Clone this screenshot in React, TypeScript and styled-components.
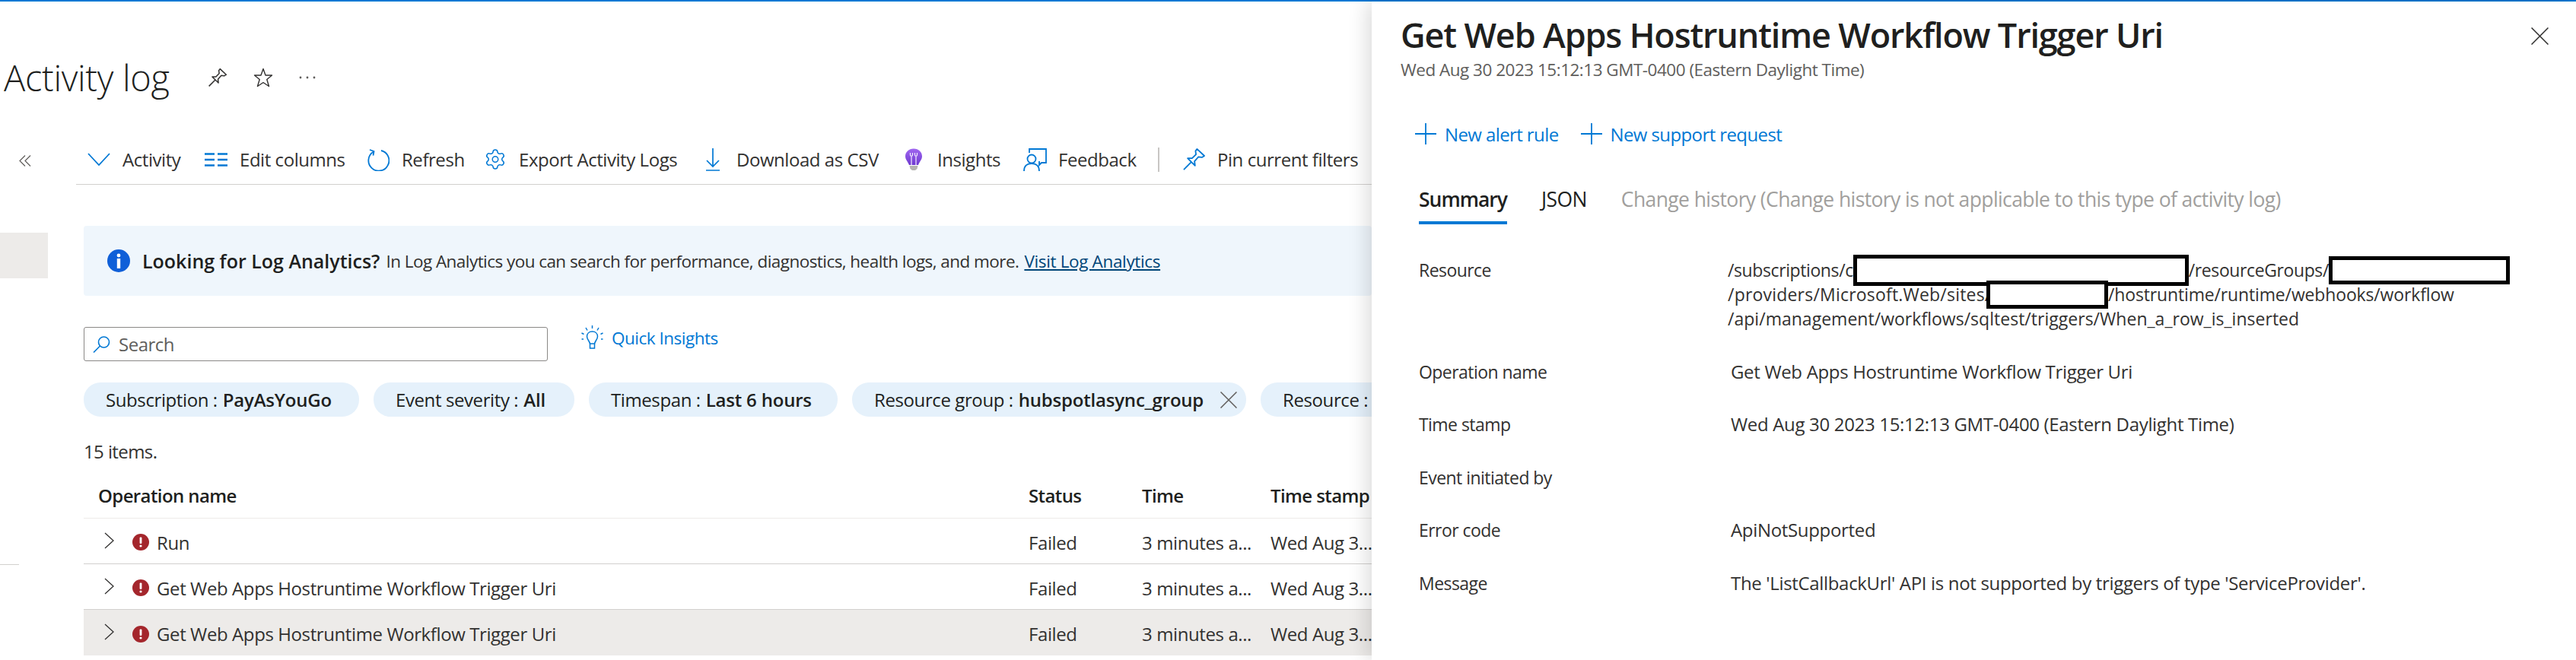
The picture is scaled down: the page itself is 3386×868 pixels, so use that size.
import React from 'react';
import styled, { createGlobalStyle } from 'styled-components';
import { Settings } from 'lucide-react';

const GlobalStyle = createGlobalStyle`
  html, body {
    margin: 0;
    height: 868px;
    overflow: hidden;
    background: #fff;
    font-family: 'Open Sans', 'Noto Sans', sans-serif;
    color: #323130;
  }
  * { box-sizing: border-box; }
`;

const Page = styled.div`
  display: flex;
  width: 3386px;
  height: 868px;
  border-top: 2px solid #0078d4;
`;

const Blade = styled.div`
  width: 1803px;
  flex: none;
  overflow: hidden;
  display: flex;
  flex-direction: column;
`;

const TitleBar = styled.div`
  display: flex;
  align-items: center;
  height: 60px;
  margin-top: 70px;
  padding-left: 5px;
`;

const PageTitle = styled.h1`
  margin: 0 46px 0 0;
  font-size: 47px;
  font-weight: 300;
  letter-spacing: -0.3px;
  line-height: 60px;
  color: #201f1e;
  width: 222px;
  white-space: nowrap;
`;

const TitleIcons = styled.div`
  display: flex;
  align-items: center;
  gap: 34px;
`;

const BladeBody = styled.div`
  display: flex;
  flex: 1;
`;

const SideNav = styled.div`
  width: 100px;
  flex: none;
  display: flex;
  flex-direction: column;
`;

const Collapse = styled.div`
  margin: 72px 0 0 25px;
  height: 15px;
  display: flex;
`;

const NavActive = styled.div`
  width: 63px;
  height: 60px;
  margin-top: 87px;
  background: #edebe9;
`;

const NavDivider = styled.div`
  width: 25px;
  height: 1px;
  margin-top: 376px;
  background: #d2d0ce;
`;

const Content = styled.div`
  flex: 1;
  min-width: 0;
`;

const Toolbar = styled.div`
  display: flex;
  align-items: center;
  height: 111px;
  padding: 45px 0 0 15px;
  border-bottom: 1px solid #d2d0ce;
  white-space: nowrap;
`;

const ToolItem = styled.div`
  display: flex;
  align-items: center;
  flex: none;
  margin-right: 30px;
  font-size: 24px;
  letter-spacing: -0.45px;
  color: #323130;
`;

const ToolIcon = styled.span`
  display: flex;
  justify-content: center;
  align-items: center;
  width: 30px;
  height: 32px;
  margin-right: 16px;
  flex: none;
`;

const ToolLabel = styled.span<{ $w: number }>`
  display: block;
  width: ${(p) => p.$w}px;
`;

const ToolSep = styled.div`
  flex: none;
  width: 2px;
  height: 32px;
  margin-right: 30px;
  background: #c8c6c4;
`;

const Section = styled.div`
  padding-left: 10px;
`;

const Banner = styled.div`
  display: flex;
  align-items: center;
  height: 92px;
  margin-top: 54px;
  padding-left: 31px;
  background: #eff6fc;
  border-radius: 4px;
  font-size: 22.5px;
  letter-spacing: -0.55px;
  white-space: nowrap;
`;

const BannerIcon = styled.span`
  display: flex;
  margin-right: 16px;
`;

const BannerLead = styled.b`
  font-size: 25px;
  font-weight: 600;
  margin-right: 8px;
  letter-spacing: 0;
  color: #201f1e;
`;

const BannerLink = styled.a`
  margin-left: 7px;
  color: #004578;
  letter-spacing: -0.35px;
  text-decoration: underline;
`;

const SearchRow = styled.div`
  display: flex;
  align-items: flex-start;
  margin-top: 41px;
`;

const SearchBox = styled.div`
  display: flex;
  align-items: center;
  width: 610px;
  height: 45px;
  padding-left: 11px;
  gap: 11px;
  border: 1.5px solid #8a8886;
  border-radius: 3px;
  font-size: 24px;
  letter-spacing: -0.5px;
  color: #605e5c;
`;

const QuickInsights = styled.a`
  display: flex;
  align-items: center;
  margin: -2px 0 0 44px;
  gap: 11px;
  font-size: 22.5px;
  letter-spacing: -0.5px;
  color: #0078d4;
`;

const Pills = styled.div`
  display: flex;
  gap: 19px;
  margin-top: 28px;
  white-space: nowrap;
`;

const Pill = styled.div<{ $w: number }>`
  display: flex;
  align-items: center;
  flex: none;
  width: ${(p) => p.$w}px;
  height: 45px;
  padding-left: 29px;
  background: #e5f1fb;
  border-radius: 22px;
  font-size: 24px;
  letter-spacing: -0.4px;
  color: #201f1e;

  b {
    font-weight: 600;
    margin-left: 7px;
    letter-spacing: -0.2px;
  }
`;

const PillClose = styled.span`
  display: flex;
  margin-left: 22px;
`;

const ItemCount = styled.div`
  margin-top: 28px;
  height: 36px;
  line-height: 36px;
  font-size: 24px;
  letter-spacing: -0.6px;
`;

const TableGrid = styled.div<{ $head?: boolean; $selected?: boolean }>`
  display: grid;
  grid-template-columns: 1242px 149px 169px 300px;
  align-items: center;
  height: ${(p) => (p.$head ? 61 : 60)}px;
  margin-top: ${(p) => (p.$head ? 9 : 0)}px;
  padding-top: ${(p) => (p.$head ? 0 : 3)}px;
  border-bottom: ${(p) => (p.$selected ? 0 : p.$head ? '1px solid #edebe9' : '1px solid #d2d0ce')};
  background: ${(p) => (p.$selected ? '#edebe9' : 'transparent')};
  font-size: 24px;
  font-weight: ${(p) => (p.$head ? 600 : 400)};
  letter-spacing: ${(p) => (p.$head ? '-0.6px' : '-0.4px')};
  color: ${(p) => (p.$head ? '#201f1e' : '#323130')};
  white-space: nowrap;
`;

const HeadName = styled.div`
  padding-left: 19px;
`;

const RowName = styled.div`
  display: flex;
  align-items: center;
  padding-left: 27px;
`;

const RowChevron = styled.span`
  display: flex;
  margin: -5px 24px 0 0;
`;

const RowError = styled.span`
  display: flex;
  margin-right: 10px;
`;

const Panel = styled.aside`
  flex: 1;
  position: relative;
  z-index: 1;
  background: #fff;
  box-shadow: -6px 0 24px rgba(0, 0, 0, 0.14);
  padding-left: 38px;
`;

const PanelHead = styled.div`
  display: flex;
  justify-content: space-between;
  padding: 14px 36px 0 0;
`;

const PanelTitle = styled.h2`
  margin: 0;
  font-size: 45px;
  font-weight: 600;
  line-height: 60px;
  letter-spacing: -1.15px;
  color: #201f1e;
  white-space: nowrap;
`;

const PanelSub = styled.div`
  margin-top: 2px;
  font-size: 22.5px;
  line-height: 28px;
  letter-spacing: -0.5px;
  color: #605e5c;
`;

const PanelClose = styled.span`
  display: flex;
  margin-top: 20px;
`;

const PanelActions = styled.div`
  display: flex;
  gap: 29px;
  margin: 55px 0 0 19px;
`;

const PanelAction = styled.a`
  display: flex;
  align-items: center;
  gap: 11px;
  height: 30px;
  font-size: 24px;
  letter-spacing: -0.6px;
  color: #0078d4;
`;

const Tabs = styled.div`
  display: flex;
  gap: 45px;
  margin: 52px 0 0 24px;
  height: 52px;
  white-space: nowrap;
`;

const Tab = styled.div<{ $active?: boolean; $disabled?: boolean }>`
  height: 52px;
  line-height: 38px;
  font-size: 26.5px;
  font-weight: ${(p) => (p.$active ? 600 : 400)};
  letter-spacing: ${(p) => (p.$active ? '-1px' : '-0.6px')};
  color: ${(p) => (p.$disabled ? '#a19f9d' : '#201f1e')};
  border-bottom: 4px solid ${(p) => (p.$active ? '#0078d4' : 'transparent')};
`;

const Details = styled.div`
  display: grid;
  grid-template-columns: 410px 1fr;
  row-gap: 37.5px;
  margin: 44px 0 0 24px;
  line-height: 32px;
  color: #323130;
`;

const DetailLabel = styled.div`
  min-height: 32px;
  font-size: 23px;
  letter-spacing: -0.55px;
`;

const DetailValue = styled.div`
  min-height: 32px;
  font-size: 24px;
  letter-spacing: -0.33px;
`;

const ResourcePath = styled.div`
  margin-left: -4px;
  font-size: 23px;
`;

const PathLine = styled.div<{ $ls: number }>`
  display: flex;
  align-items: center;
  height: 32px;
  letter-spacing: ${(p) => p.$ls}px;
  white-space: pre;
`;

const PathPrefix = styled.span`
  width: 340px;
  letter-spacing: 0.2px;
`;

const Redact = styled.span<{ $w: number; $h: number }>`
  display: block;
  flex: none;
  width: ${(p) => p.$w}px;
  height: ${(p) => p.$h}px;
  margin: -8px 0;
  border: 5px solid #000;
  background: #fff;
`;

const Stroke = styled.svg<{ $c?: string }>`
  display: block;
  fill: none;
  stroke: ${(p) => p.$c ?? '#323130'};
  stroke-width: 1.4;
  flex: none;
`;

const BLUE = '#0078d4';

const PinIcon = ({ size, color }: { size: number; color?: string }) => (
  <Stroke $c={color} width={size} height={size} viewBox="0 0 24 24">
    <path d="M15 1.5 L22.5 8.5 L20 10 L16.5 9.5 L12.5 14 L13 18.5 L5.5 11 L10 11 L14 7 L13.5 3.5 Z" strokeLinejoin="round" />
    <path d="M9 15 L1.5 22.5" />
  </Stroke>
);

const ErrorIcon = () => (
  <svg width="22" height="22" viewBox="0 0 22 22">
    <circle cx="11" cy="11" r="11" fill="#a4262c" />
    <rect x="9.6" y="4.6" width="2.8" height="8.4" rx="1" fill="#fff" />
    <circle cx="11" cy="16" r="1.6" fill="#fff" />
  </svg>
);

const ChevronRight = () => (
  <Stroke width="13" height="22" viewBox="0 0 13 22" $c="#323130">
    <path d="M1 1 L12 11 L1 21" strokeWidth="1.3" />
  </Stroke>
);

const CloseIcon = ({ size, color }: { size: number; color: string }) => (
  <Stroke $c={color} width={size} height={size} viewBox="0 0 22 22">
    <path d="M0.5 0.5 L21.5 21.5 M21.5 0.5 L0.5 21.5" strokeWidth="1.5" />
  </Stroke>
);

const PlusIcon = () => (
  <Stroke $c={BLUE} width="28" height="28" viewBox="0 0 28 28">
    <path d="M14 0 V28 M0 14 H28" strokeWidth="1.8" />
  </Stroke>
);

const BulbFilled = () => (
  <svg width="24" height="29" viewBox="0 0 24 29">
    <defs>
      <linearGradient id="bulb" x1="0" y1="0" x2="0" y2="1">
        <stop offset="0" stopColor="#a066f0" />
        <stop offset="1" stopColor="#6f3ad0" />
      </linearGradient>
    </defs>
    <path d="M12 0.5 C5.5 0.5 1 5 1 10.5 C1 15 4 17 6 22 H18 C20 17 23 15 23 10.5 C23 5 18.5 0.5 12 0.5 Z" fill="url(#bulb)" />
    <path d="M7.5 6 V9 C7.5 10.5 10.5 10.5 10.5 9 V6 M13.5 6 V9 C13.5 10.5 16.5 10.5 16.5 9 V6 M9 10 V22 M15 10 V22" fill="none" stroke="#f3ecff" strokeWidth="1.2" />
    <path d="M6.5 23 H17.5 L16.5 27 L14 29 H10 L7.5 27 Z" fill="#b5b3b1" />
  </svg>
);

const App = () => {
  const rows = [
    { name: 'Run' },
    { name: 'Get Web Apps Hostruntime Workflow Trigger Uri' },
    { name: 'Get Web Apps Hostruntime Workflow Trigger Uri', selected: true },
  ];

  return (
    <>
      <GlobalStyle />
      <Page>
        <Blade>
          <TitleBar>
            <PageTitle>Activity log</PageTitle>
            <TitleIcons>
              <PinIcon size={26} />
              <Stroke width="26" height="26" viewBox="0 0 26 26">
                <path d="M13 1.5 L16 10 L24.5 10 L17.8 15.5 L20.5 24.5 L13 19.5 L5.5 24.5 L8.2 15.5 L1.5 10 L10 10 Z" strokeLinejoin="round" />
              </Stroke>
              <svg width="22" height="4" viewBox="0 0 22 4">
                <circle cx="2" cy="2" r="1.4" fill="#605e5c" />
                <circle cx="11" cy="2" r="1.4" fill="#605e5c" />
                <circle cx="20" cy="2" r="1.4" fill="#605e5c" />
              </svg>
            </TitleIcons>
          </TitleBar>
          <BladeBody>
            <SideNav>
              <Collapse>
                <Stroke width="16" height="15" viewBox="0 0 16 15" $c="#605e5c">
                  <path d="M8 0.5 L1 7.5 L8 14.5 M15 0.5 L8 7.5 L15 14.5" strokeWidth="1.2" />
                </Stroke>
              </Collapse>
              <NavActive />
              <NavDivider />
            </SideNav>
            <Content>
              <Toolbar>
                <ToolItem>
                  <ToolIcon>
                    <Stroke $c={BLUE} width="30" height="17" viewBox="0 0 30 17">
                      <path d="M1 1 L15 16 L29 1" strokeWidth="1.8" />
                    </Stroke>
                  </ToolIcon>
                  <ToolLabel $w={78}>Activity</ToolLabel>
                </ToolItem>
                <ToolItem>
                  <ToolIcon>
                    <Stroke $c={BLUE} width="30" height="18" viewBox="0 0 30 18">
                      <path d="M0 1.5 H13 M17 1.5 H30 M0 9 H13 M17 9 H30 M0 16.5 H13 M17 16.5 H30" strokeWidth="2.4" />
                    </Stroke>
                  </ToolIcon>
                  <ToolLabel $w={137}>Edit columns</ToolLabel>
                </ToolItem>
                <ToolItem>
                  <ToolIcon>
                    <Stroke $c={BLUE} width="30" height="30" viewBox="0 0 30 30">
                      <path d="M19 3 A13.5 13.5 0 1 1 9 4.5" strokeWidth="1.8" />
                      <path d="M4 2 L9.5 4 L8.5 9.5" strokeWidth="1.8" />
                    </Stroke>
                  </ToolIcon>
                  <ToolLabel $w={78}>Refresh</ToolLabel>
                </ToolItem>
                <ToolItem>
                  <ToolIcon>
                    <Settings size={31} color={BLUE} strokeWidth={1.2} />
                  </ToolIcon>
                  <ToolLabel $w={210}>Export Activity Logs</ToolLabel>
                </ToolItem>
                <ToolItem>
                  <ToolIcon>
                    <Stroke $c={BLUE} width="18" height="30" viewBox="0 0 18 30">
                      <path d="M9 0 V24 M1 16 L9 24 L17 16 M0 29 H18" strokeWidth="1.7" />
                    </Stroke>
                  </ToolIcon>
                  <ToolLabel $w={188}>Download as CSV</ToolLabel>
                </ToolItem>
                <ToolItem>
                  <ToolIcon>
                    <BulbFilled />
                  </ToolIcon>
                  <ToolLabel $w={83}>Insights</ToolLabel>
                </ToolItem>
                <ToolItem>
                  <ToolIcon>
                    <Stroke $c={BLUE} width="31" height="30" viewBox="0 0 31 30">
                      <path d="M8 6 V1 H30 V19 H24 L21 22 V17" strokeWidth="1.8" />
                      <circle cx="11" cy="14" r="5.5" strokeWidth="1.8" />
                      <path d="M1 30 C1 23 5 20 11 20 C17 20 21 23 21 30" strokeWidth="1.8" />
                    </Stroke>
                  </ToolIcon>
                  <ToolLabel $w={101}>Feedback</ToolLabel>
                </ToolItem>
                <ToolSep />
                <ToolItem>
                  <ToolIcon>
                    <PinIcon size={31} color={BLUE} />
                  </ToolIcon>
                  <ToolLabel $w={182}>Pin current filters</ToolLabel>
                </ToolItem>
              </Toolbar>
              <Section>
                <Banner>
                  <BannerIcon>
                    <svg width="30" height="30" viewBox="0 0 30 30">
                      <circle cx="15" cy="15" r="15" fill="#0f5fd8" />
                      <circle cx="15" cy="8" r="2.4" fill="#fff" />
                      <rect x="12.8" y="12" width="4.4" height="13" fill="#fff" />
                    </svg>
                  </BannerIcon>
                  <BannerLead>Looking for Log Analytics?</BannerLead>
                  In Log Analytics you can search for performance, diagnostics, health logs, and more.
                  <BannerLink>Visit Log Analytics</BannerLink>
                </Banner>
                <SearchRow>
                  <SearchBox>
                    <Stroke $c={BLUE} width="23" height="22" viewBox="0 0 23 22">
                      <circle cx="14.5" cy="8" r="7" strokeWidth="1.6" />
                      <path d="M9.5 13 L1 21.5" strokeWidth="1.6" />
                    </Stroke>
                    Search
                  </SearchBox>
                  <QuickInsights>
                    <Stroke $c={BLUE} width="29" height="32" viewBox="0 0 29 32">
                      <path d="M14.5 8 C10 8 7.5 11 7.5 14.5 C7.5 18 10.5 20 11.5 24 H17.5 C18.5 20 21.5 18 21.5 14.5 C21.5 11 19 8 14.5 8 Z" strokeWidth="1.5" />
                      <path d="M11.5 24 V30 H17.5 V24" strokeWidth="1.5" />
                      <path d="M14.5 0 V4 M6 3 L8 6.5 M23 3 L21 6.5 M0.5 10 L3.5 11.5 M28.5 10 L25.5 11.5 M0.5 18 H3 M26 18 H28.5" strokeWidth="1.5" />
                    </Stroke>
                    Quick Insights
                  </QuickInsights>
                </SearchRow>
                <Pills>
                  <Pill $w={362}>Subscription :<b>PayAsYouGo</b></Pill>
                  <Pill $w={264}>Event severity :<b>All</b></Pill>
                  <Pill $w={327}>Timespan :<b>Last 6 hours</b></Pill>
                  <Pill $w={518}>
                    Resource group :<b>hubspotlasync_group</b>
                    <PillClose><CloseIcon size={22} color="#605e5c" /></PillClose>
                  </Pill>
                  <Pill $w={300}>Resource :</Pill>
                </Pills>
                <ItemCount>15 items.</ItemCount>
                <TableGrid $head>
                  <HeadName>Operation name</HeadName>
                  <div>Status</div>
                  <div>Time</div>
                  <div>Time stamp</div>
                </TableGrid>
                {rows.map((r, i) => (
                  <TableGrid key={i} $selected={r.selected}>
                    <RowName>
                      <RowChevron><ChevronRight /></RowChevron>
                      <RowError><ErrorIcon /></RowError>
                      {r.name}
                    </RowName>
                    <div>Failed</div>
                    <div>3 minutes a...</div>
                    <div>Wed Aug 3...</div>
                  </TableGrid>
                ))}
              </Section>
            </Content>
          </BladeBody>
        </Blade>
        <Panel>
          <PanelHead>
            <div>
              <PanelTitle>Get Web Apps Hostruntime Workflow Trigger Uri</PanelTitle>
              <PanelSub>Wed Aug 30 2023 15:12:13 GMT-0400 (Eastern Daylight Time)</PanelSub>
            </div>
            <PanelClose><CloseIcon size={23} color="#323130" /></PanelClose>
          </PanelHead>
          <PanelActions>
            <PanelAction><PlusIcon />New alert rule</PanelAction>
            <PanelAction><PlusIcon />New support request</PanelAction>
          </PanelActions>
          <Tabs>
            <Tab $active>Summary</Tab>
            <Tab>JSON</Tab>
            <Tab $disabled>Change history (Change history is not applicable to this type of activity log)</Tab>
          </Tabs>
          <Details>
            <DetailLabel>Resource</DetailLabel>
            <ResourcePath>
              <PathLine $ls={-0.4}>
                /subscriptions/c<Redact $w={441} $h={41} />/resourceGroups/<Redact $w={238} $h={37} />
              </PathLine>
              <PathLine $ls={-0.15}>
                <PathPrefix>/providers/Microsoft.Web/sites/</PathPrefix>
                <Redact $w={160} $h={37} />/hostruntime/runtime/webhooks/workflow
              </PathLine>
              <PathLine $ls={0.02}>/api/management/workflows/sqltest/triggers/When_a_row_is_inserted</PathLine>
            </ResourcePath>
            <DetailLabel>Operation name</DetailLabel>
            <DetailValue>Get Web Apps Hostruntime Workflow Trigger Uri</DetailValue>
            <DetailLabel>Time stamp</DetailLabel>
            <DetailValue>Wed Aug 30 2023 15:12:13 GMT-0400 (Eastern Daylight Time)</DetailValue>
            <DetailLabel>Event initiated by</DetailLabel>
            <DetailValue />
            <DetailLabel>Error code</DetailLabel>
            <DetailValue>ApiNotSupported</DetailValue>
            <DetailLabel>Message</DetailLabel>
            <DetailValue>The 'ListCallbackUrl' API is not supported by triggers of type 'ServiceProvider'.</DetailValue>
          </Details>
        </Panel>
      </Page>
    </>
  );
};

export default App;
